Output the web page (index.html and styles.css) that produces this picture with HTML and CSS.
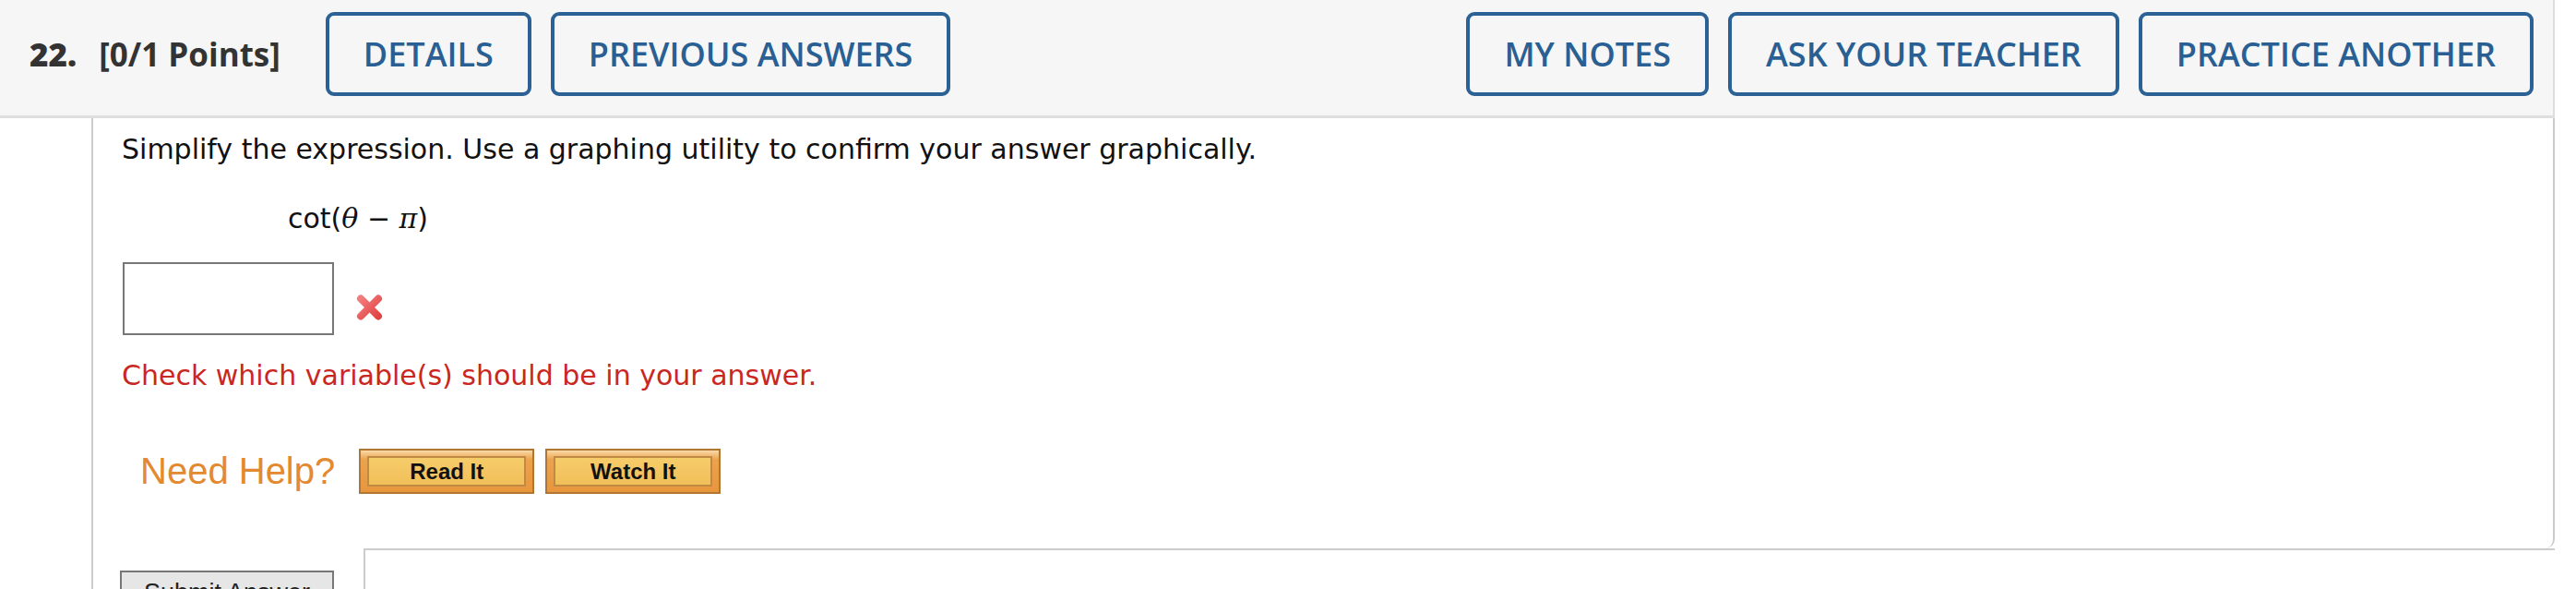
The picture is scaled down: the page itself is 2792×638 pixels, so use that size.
FILE: index.html
```html
<!DOCTYPE html>
<html>
<head>
<meta charset="utf-8">
<link rel="stylesheet" href="styles.css">
</head>
<body>
<div class="page">
  <header class="qhead">
    <div class="qtitle"><span class="qnum">22.</span><span class="qpts">[0/1 Points]</span></div>
    <div class="btn-group">
      <span class="hbtn">DETAILS</span>
      <span class="hbtn">PREVIOUS ANSWERS</span>
    </div>
    <div class="spacer"></div>
    <div class="btn-group">
      <span class="hbtn">MY NOTES</span>
      <span class="hbtn">ASK YOUR TEACHER</span>
      <span class="hbtn">PRACTICE ANOTHER</span>
    </div>
  </header>
  <div class="panel">
    <div class="question">
      <p class="prompt">Simplify the expression. Use a graphing utility to confirm your answer graphically.</p>
      <div class="expr">cot(<i>θ</i> − <i>π</i>)</div>
      <div class="answer-row">
        <div class="answer-input"></div>
        <svg class="xmark" viewBox="0 0 30 30" width="31" height="30">
          <defs>
            <linearGradient id="xg" x1="0" y1="0" x2="1" y2="1">
              <stop offset="0" stop-color="#f27b7b"/>
              <stop offset="1" stop-color="#e24444"/>
            </linearGradient>
          </defs>
          <path d="M5.5 5.5 L24.5 24.5 M24.5 5.5 L5.5 24.5" stroke="url(#xg)" stroke-width="8" stroke-linecap="round" fill="none"/>
        </svg>
      </div>
      <p class="feedback">Check which variable(s) should be in your answer.</p>
      <div class="help">
        <span class="help-label">Need Help?</span>
        <span class="help-btn"><span class="help-inner">Read It</span></span>
        <span class="help-btn"><span class="help-inner">Watch It</span></span>
      </div>
    </div>
    <div class="footer">
      <div class="submit-col"><span class="submit-btn">Submit Answer</span></div>
      <div class="resp-box"></div>
    </div>
  </div>
</div>
</body>
</html>
```

FILE: styles.css
```css
* { box-sizing: border-box; }
html, body { margin: 0; padding: 0; background: #fff; }
body { overflow: hidden; }

.page { width: 2769px; }

.qhead {
  display: flex;
  align-items: flex-start;
  height: 128px;
  padding: 13px 21px 0 32px;
  background: #f6f6f6;
  border-bottom: 3px solid #dedede;
  border-right: 2px solid #dedede;
  font-family: "Open Sans", sans-serif;
}
.qtitle {
  height: 91px;
  display: flex;
  align-items: center;
  color: #333;
  font-size: 35px;
  margin-right: 49px;
  white-space: nowrap;
}
.qnum { font-weight: 800; margin-right: 24px; }
.qpts { font-weight: 700; }
.btn-group { display: flex; gap: 21px; }
.spacer { flex: 1; }
.hbtn {
  height: 91px;
  display: flex;
  align-items: center;
  justify-content: center;
  padding: 0 37px;
  border: 4px solid #2b6194;
  border-radius: 9px;
  color: #2a5f93;
  font-size: 36px;
  font-weight: 600;
  white-space: nowrap;
}

.panel {
  margin-left: 99px;
  border-left: 2px solid #cccccc;
}
.question {
  padding: 16px 0 59px 31px;
  border-right: 2px solid #cccccc;
  border-bottom-right-radius: 10px;
  font-family: "DejaVu Sans", Verdana, sans-serif;
  font-size: 30px;
  line-height: 35px;
  color: #111;
}
.prompt { margin: 0; white-space: nowrap; }
.expr { margin-top: 40px; padding-left: 180px; white-space: nowrap; }
.expr i { font-family: "DejaVu Serif", serif; font-style: italic; }
.answer-row {
  margin-top: 30px;
  display: flex;
  align-items: flex-end;
}
.answer-input {
  width: 229px;
  height: 79px;
  margin-left: 1px;
  border: 2px solid #777;
  background: #fff;
}
.xmark { margin-left: 23px; margin-bottom: 15px; }
.feedback { margin: 26px 0 0; color: #c9271f; white-space: nowrap; }

.help {
  margin-top: 62px;
  padding-left: 20px;
  display: flex;
  align-items: center;
  gap: 12px;
}
.help-label {
  font-family: "Liberation Sans", Arial, sans-serif;
  font-size: 40px;
  line-height: 45px;
  color: #e3892f;
  margin-right: 14px;
}
.help-btn {
  width: 190px;
  height: 49px;
  padding: 6px 7px;
  border: 2px solid #b07633;
  background: linear-gradient(#f9d9a8 0%, #eca24c 22%, #e8963c 100%);
}
.help-inner {
  display: flex;
  align-items: center;
  justify-content: center;
  height: 33px;
  border: 2px solid #c08a44;
  background: linear-gradient(#f6cc6a, #f1bf5a);
  font-family: "Liberation Sans", Arial, sans-serif;
  font-weight: 700;
  font-size: 24px;
  color: #111;
}

.footer { display: flex; align-items: flex-start; }
.submit-col { width: 293px; padding: 24px 0 0 29px; }
.submit-btn {
  display: block;
  width: 232px;
  height: 52px;
  border: 2px solid #777;
  background: #e6e6e6;
  font-family: "Liberation Sans", Arial, sans-serif;
  font-size: 27px;
  line-height: 44px;
  text-align: center;
  color: #222;
}
.resp-box {
  flex: 1;
  height: 120px;
  border-top: 2px solid #cccccc;
  border-left: 2px solid #cccccc;
}
```
